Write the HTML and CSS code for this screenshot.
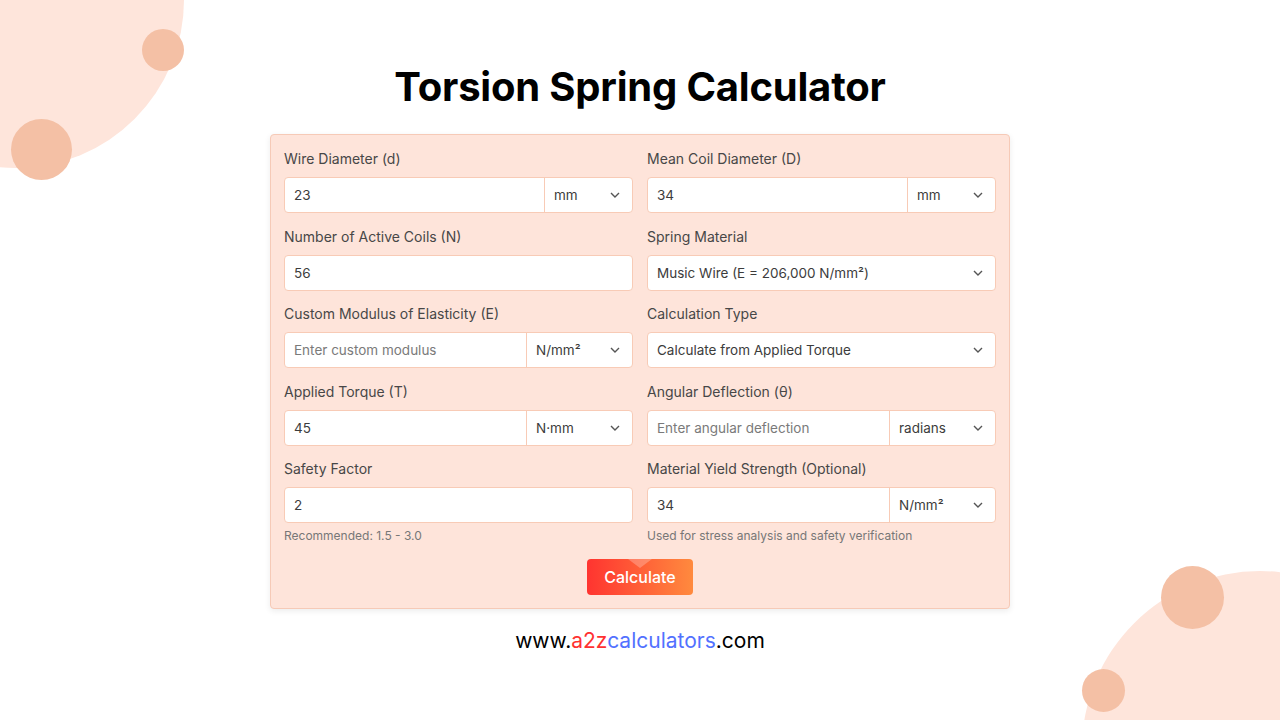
FILE: index.html
```html
<!DOCTYPE html>
<html lang="en">
  <head>
    <meta charset="UTF-8" />
    <meta name="viewport" content="width=device-width, initial-scale=1.0" />
    <title>Torsion Spring Calculator</title>
    <link rel="stylesheet" href="styles.css">
  </head>
  <body>
    <div class="page">
      <!-- Decorative background circles -->
      <span class="blob blob-tl"></span>
      <span class="dot dot-tl-sm"></span>
      <span class="dot dot-tl-lg"></span>
      <span class="blob blob-br"></span>
      <span class="dot dot-br-lg"></span>
      <span class="dot dot-br-sm"></span>

      <main class="wrap">
        <h1 class="title">Torsion Spring Calculator</h1>

        <form class="calc" onsubmit="return false">
          <div class="grid">
            <div class="field">
              <label for="wire">Wire Diameter (d)</label>
              <div class="input-group">
                <input type="number" id="wire" value="23" />
                <div class="unit unit-sm">
                  <select><option>mm</option></select>
                  <svg class="chev" viewBox="0 0 10 6"><path d="M1 1l4 4 4-4" /></svg>
                </div>
              </div>
            </div>

            <div class="field">
              <label for="coil">Mean Coil Diameter (D)</label>
              <div class="input-group">
                <input type="number" id="coil" value="34" />
                <div class="unit unit-sm">
                  <select><option>mm</option></select>
                  <svg class="chev" viewBox="0 0 10 6"><path d="M1 1l4 4 4-4" /></svg>
                </div>
              </div>
            </div>

            <div class="field">
              <label for="coils">Number of Active Coils (N)</label>
              <div class="input-group">
                <input type="number" id="coils" value="56" />
              </div>
            </div>

            <div class="field">
              <label for="material">Spring Material</label>
              <div class="input-group unit">
                <select id="material"><option>Music Wire (E = 206,000 N/mm²)</option></select>
                <svg class="chev" viewBox="0 0 10 6"><path d="M1 1l4 4 4-4" /></svg>
              </div>
            </div>

            <div class="field">
              <label for="modulus">Custom Modulus of Elasticity (E)</label>
              <div class="input-group">
                <input type="number" id="modulus" placeholder="Enter custom modulus" />
                <div class="unit unit-md">
                  <select><option>N/mm²</option></select>
                  <svg class="chev" viewBox="0 0 10 6"><path d="M1 1l4 4 4-4" /></svg>
                </div>
              </div>
            </div>

            <div class="field">
              <label for="calcType">Calculation Type</label>
              <div class="input-group unit">
                <select id="calcType"><option>Calculate from Applied Torque</option></select>
                <svg class="chev" viewBox="0 0 10 6"><path d="M1 1l4 4 4-4" /></svg>
              </div>
            </div>

            <div class="field">
              <label for="torque">Applied Torque (T)</label>
              <div class="input-group">
                <input type="number" id="torque" value="45" />
                <div class="unit unit-md">
                  <select><option>N·mm</option></select>
                  <svg class="chev" viewBox="0 0 10 6"><path d="M1 1l4 4 4-4" /></svg>
                </div>
              </div>
            </div>

            <div class="field">
              <label for="angle">Angular Deflection (θ)</label>
              <div class="input-group">
                <input type="number" id="angle" placeholder="Enter angular deflection" />
                <div class="unit unit-md">
                  <select><option>radians</option></select>
                  <svg class="chev" viewBox="0 0 10 6"><path d="M1 1l4 4 4-4" /></svg>
                </div>
              </div>
            </div>

            <div class="field">
              <label for="safety">Safety Factor</label>
              <div class="input-group">
                <input type="number" id="safety" value="2" />
              </div>
              <small class="hint">Recommended: 1.5 - 3.0</small>
            </div>

            <div class="field">
              <label for="yield">Material Yield Strength (Optional)</label>
              <div class="input-group">
                <input type="number" id="yield" value="34" />
                <div class="unit unit-md">
                  <select><option>N/mm²</option></select>
                  <svg class="chev" viewBox="0 0 10 6"><path d="M1 1l4 4 4-4" /></svg>
                </div>
              </div>
              <small class="hint">Used for stress analysis and safety verification</small>
            </div>
          </div>

          <div class="actions">
            <button type="submit" class="btn">Calculate</button>
          </div>
        </form>

        <p class="site">www.<span class="site-red">a2z</span><span class="site-blue">calculators</span>.com</p>
      </main>
    </div>
  </body>
</html>
```

FILE: styles.css
```css
/* Global Styles */
* {
  margin: 0;
  padding: 0;
  box-sizing: border-box;
}

body {
  background: #fff;
  font-family: "Inter", "Noto Sans", sans-serif;
}

.page {
  position: relative;
  width: 1280px;
  height: 720px;
  overflow: hidden;
}

/* Background decoration */
.blob,
.dot {
  position: absolute;
  border-radius: 50%;
}

.blob {
  background: #fee5db;
}

.blob-tl {
  width: 336px;
  height: 336px;
  left: -152px;
  top: -168px;
}

.blob-br {
  width: 356px;
  height: 356px;
  left: 1082px;
  top: 571px;
}

.dot {
  background: #f4c0a5;
}

.dot-tl-sm {
  width: 42px;
  height: 42px;
  left: 142px;
  top: 29px;
}

.dot-tl-lg {
  width: 61px;
  height: 61px;
  left: 11px;
  top: 119px;
}

.dot-br-lg {
  width: 63px;
  height: 63px;
  left: 1161px;
  top: 566px;
}

.dot-br-sm {
  width: 43px;
  height: 43px;
  left: 1082px;
  top: 669px;
}

/* Main column */
.wrap {
  position: relative;
  width: 740px;
  margin: 0 auto;
  padding-top: 62px;
}

.title {
  font-family: "Inter", sans-serif;
  font-weight: 700;
  font-size: 40px;
  line-height: 50px;
  letter-spacing: -0.2px;
  text-align: center;
  color: #000;
  margin-bottom: 22px;
}

/* Calculator card */
.calc {
  background: #fee4da;
  border: 1px solid #f6cab7;
  border-radius: 4px;
  padding: 15px 13px 13px;
  box-shadow: 0 2px 6px rgba(0, 0, 0, 0.08);
}

.grid {
  display: grid;
  grid-template-columns: 1fr 1fr;
  column-gap: 14px;
  row-gap: 14.5px;
}

.field label {
  display: block;
  font-size: 14px;
  line-height: 18px;
  color: #474747;
  margin-bottom: 9px;
}

.input-group {
  display: flex;
  height: 36px;
  background: #fff;
  border: 1px solid #f8cbb6;
  border-radius: 4px;
}

.input-group input {
  flex: 1;
  min-width: 0;
  border: none;
  outline: none;
  background: transparent;
  padding: 0 9px;
  font-family: inherit;
  font-size: 13.5px;
  color: #3c3c3c;
  -moz-appearance: textfield;
}

.input-group input::placeholder {
  color: #7a7a7a;
}

.input-group input::-webkit-inner-spin-button,
.input-group input::-webkit-outer-spin-button {
  -webkit-appearance: none;
}

.unit {
  position: relative;
}

.unit select {
  appearance: none;
  -webkit-appearance: none;
  width: 100%;
  height: 100%;
  border: none;
  outline: none;
  background: transparent;
  padding: 0 30px 0 9px;
  font-family: inherit;
  font-size: 13.5px;
  color: #3c3c3c;
}

.input-group .unit {
  border-left: 1px solid #f8cbb6;
}

.unit-sm {
  width: 88px;
}

.unit-md {
  width: 106px;
}

.chev {
  position: absolute;
  right: 12px;
  top: 50%;
  width: 10px;
  height: 6px;
  margin-top: -3px;
  fill: none;
  stroke: #555;
  stroke-width: 1.4;
  pointer-events: none;
}

.hint {
  display: block;
  margin-top: 5px;
  font-size: 12px;
  line-height: 16px;
  color: #777;
}

/* Button */
.actions {
  display: flex;
  justify-content: center;
  margin-top: 15px;
}

.btn {
  position: relative;
  width: 106px;
  height: 36px;
  border: none;
  border-radius: 4px;
  background: linear-gradient(90deg, #ff3430, #ff8a3e);
  color: #fff;
  font-family: inherit;
  font-size: 16px;
  font-weight: 500;
  cursor: pointer;
}

.btn::before {
  content: "";
  position: absolute;
  left: 50%;
  top: 0;
  margin-left: -12px;
  border-left: 12px solid transparent;
  border-right: 12px solid transparent;
  border-top: 9px solid rgba(255, 255, 255, 0.25);
}

/* Footer link */
.site {
  margin-top: 18px;
  text-align: center;
  font-family: "Inter", sans-serif;
  font-size: 21px;
  line-height: 28px;
  color: #000;
}

.site-red {
  color: #ff3131;
}

.site-blue {
  color: #5271ff;
}
```
